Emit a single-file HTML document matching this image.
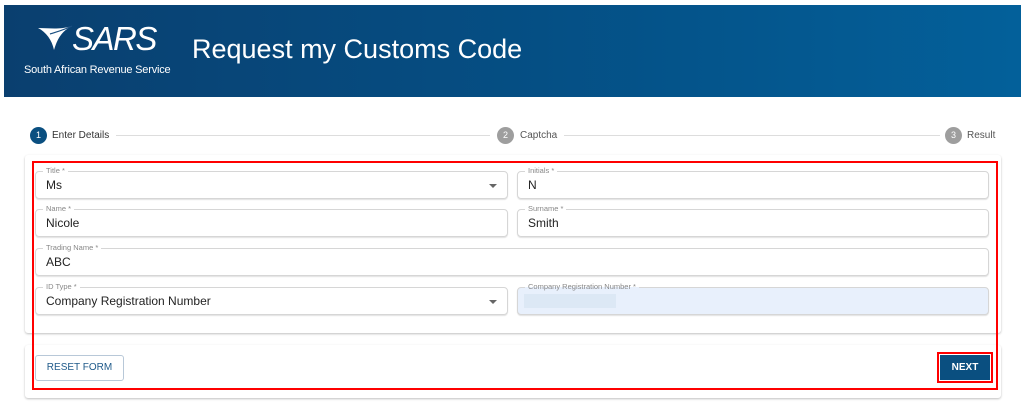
<!DOCTYPE html>
<html><head><meta charset="utf-8"><style>
*{box-sizing:border-box;margin:0;padding:0}
body{width:1024px;height:404px;background:#fff;font-family:"Liberation Sans",sans-serif;position:relative;overflow:hidden}
.hdr{position:absolute;left:4px;top:5px;width:1017px;height:92px;background:linear-gradient(90deg,#0a3f6f 0%,#054e83 50%,#03609a 100%)}
.abs{position:absolute}
.circ{position:absolute;width:17px;height:17px;border-radius:50%;color:#fff;font-size:9px;text-align:center;line-height:17px}
.st{position:absolute;font-size:10px;color:#555;top:130px}
.line{position:absolute;height:1px;background:#ddd;top:135px}
.card{position:absolute;background:#fff;border-radius:3px;box-shadow:0 1px 2px rgba(0,0,0,.25)}
.f{position:absolute;border:1px solid #d6d6d6;border-radius:4px;height:28px;box-shadow:0 1px 1px rgba(0,0,0,.12)}
.f .l{position:absolute;top:-6px;left:7px;background:#fff;padding:0 3px;font-size:7.5px;color:#888;line-height:10px}
.f .v{position:absolute;left:10px;top:6px;font-size:12px;color:#222}
.f .a{position:absolute;right:10px;top:12px;width:0;height:0;border-left:4px solid transparent;border-right:4px solid transparent;border-top:4px solid #666}
</style></head><body>
<div class="hdr"></div>
<svg class="abs" style="left:36px;top:24px" width="40" height="28" viewBox="0 0 40 28"><path d="M2 4 C12 4 24 6 36 2 C28 6 22 12 18 26 C16 16 10 8 2 4 Z" fill="#fff"/><path d="M14 10 C20 8 28 6 36 2" stroke="#1a4f80" stroke-width="1.2" fill="none"/></svg>
<div class="abs" style="left:72px;top:20px;font-size:33px;font-style:italic;color:#fff;letter-spacing:-1.5px">SARS</div>
<div class="abs" style="left:24px;top:64px;font-size:11px;color:#fff;letter-spacing:-0.2px">South African Revenue Service</div>
<div class="abs" style="left:192px;top:34px;font-size:27px;color:#fff">Request my Customs Code</div>

<div class="circ" style="left:30px;top:127px;background:#0a4f80">1</div>
<div class="st" style="left:52px;color:#333">Enter Details</div>
<div class="line" style="left:116px;width:374px"></div>
<div class="circ" style="left:497px;top:127px;background:#9e9e9e">2</div>
<div class="st" style="left:520px">Captcha</div>
<div class="line" style="left:564px;width:376px"></div>
<div class="circ" style="left:945px;top:127px;background:#9e9e9e">3</div>
<div class="st" style="left:967px">Result</div>

<div class="card" style="left:25px;top:155px;width:976px;height:178px"></div>
<div class="card" style="left:25px;top:345px;width:976px;height:53px"></div>

<div class="f" style="left:35px;top:171px;width:473px"><span class="l">Title *</span><span class="v">Ms</span><span class="a"></span></div>
<div class="f" style="left:517px;top:171px;width:472px"><span class="l">Initials *</span><span class="v">N</span></div>
<div class="f" style="left:35px;top:209px;width:473px"><span class="l">Name *</span><span class="v">Nicole</span></div>
<div class="f" style="left:517px;top:209px;width:472px"><span class="l">Surname *</span><span class="v">Smith</span></div>
<div class="f" style="left:35px;top:248px;width:954px"><span class="l">Trading Name *</span><span class="v">ABC</span></div>
<div class="f" style="left:35px;top:287px;width:473px"><span class="l">ID Type *</span><span class="v">Company Registration Number</span><span class="a"></span></div>
<div class="f" style="left:517px;top:287px;width:472px;background:#e8f0fc"><span class="l" style="background:linear-gradient(#fff 50%,#e8f0fc 50%)">Company Registration Number *</span><span style="position:absolute;left:6px;top:6px;width:92px;height:14px;background:#dce8f5"></span></div>

<div class="abs" style="left:35px;top:355px;width:89px;height:26px;border:1px solid #b8c8d8;border-radius:3px;font-size:10px;color:#1f5a8a;text-align:center;line-height:24px">RESET FORM</div>
<div class="abs" style="left:940px;top:355px;width:50px;height:25px;background:#0a4f80;color:#fff;font-size:10px;font-weight:bold;text-align:center;line-height:25px">NEXT</div>
<div class="abs" style="left:937px;top:352px;width:56px;height:31px;border:2px solid #f00"></div>
<div class="abs" style="left:32px;top:161px;width:966px;height:229px;border:2px solid #f00"></div>
</body></html>
